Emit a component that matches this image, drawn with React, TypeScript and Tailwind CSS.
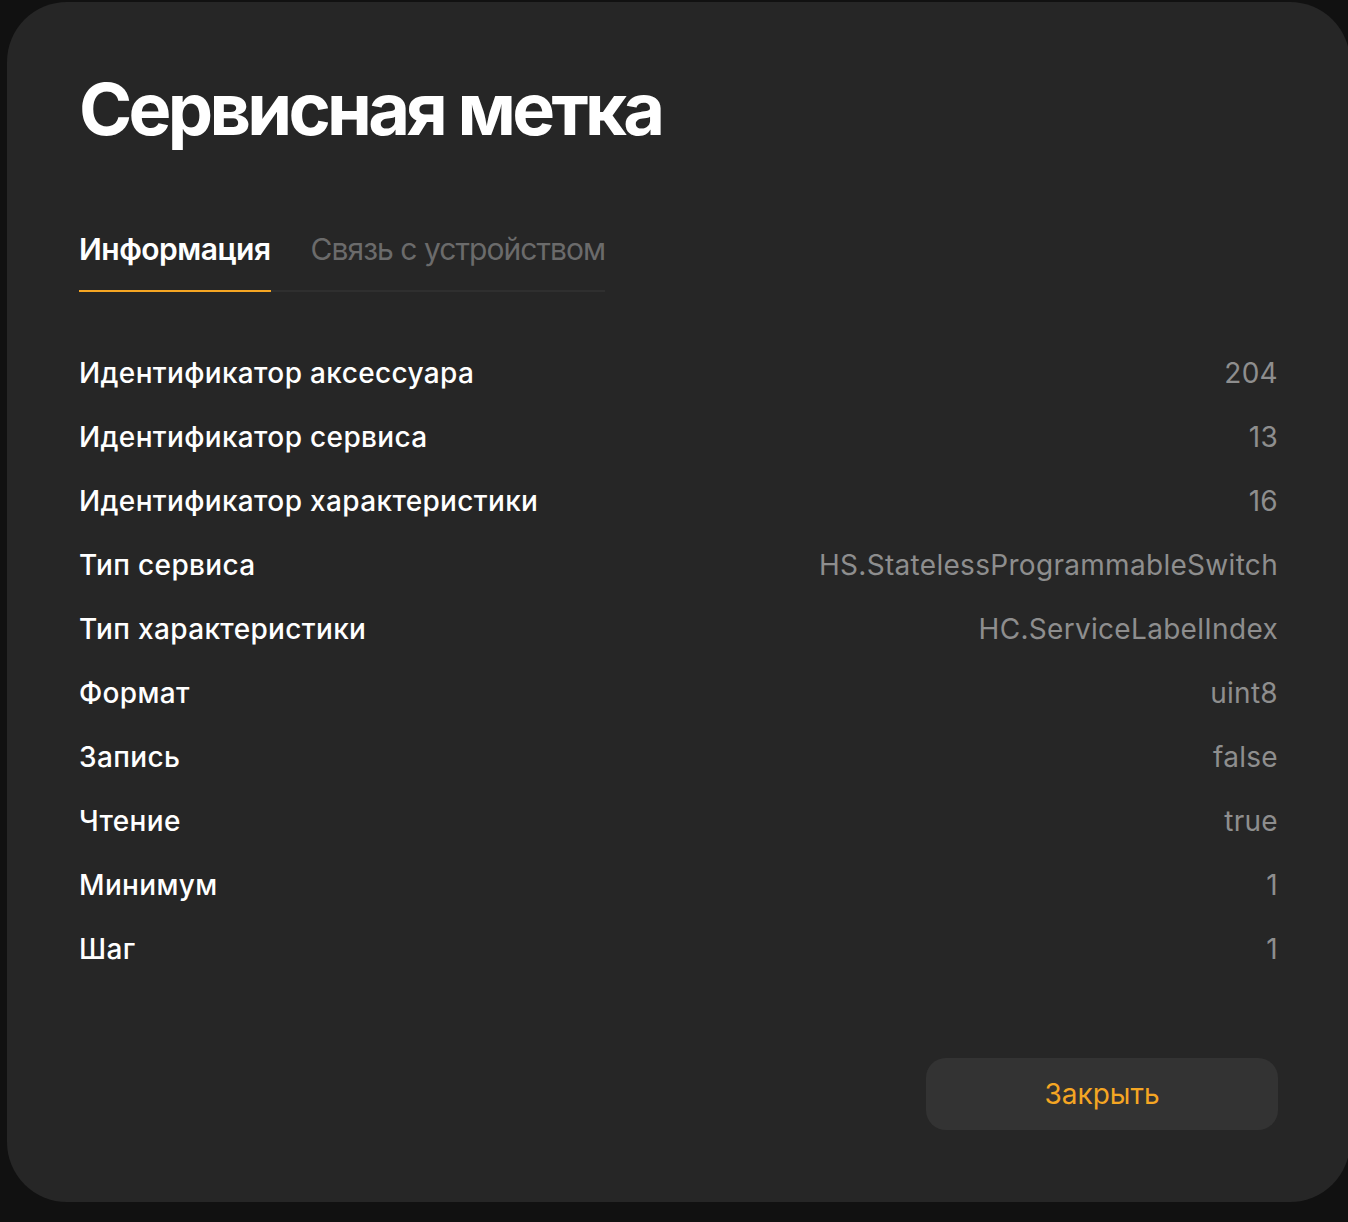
const rows: [string, string][] = [
  ["Идентификатор аксессуара", "204"],
  ["Идентификатор сервиса", "13"],
  ["Идентификатор характеристики", "16"],
  ["Тип сервиса", "HS.StatelessProgrammableSwitch"],
  ["Тип характеристики", "HC.ServiceLabelIndex"],
  ["Формат", "uint8"],
  ["Запись", "false"],
  ["Чтение", "true"],
  ["Минимум", "1"],
  ["Шаг", "1"],
];

const App = () => {
  return (
    <div
      className="w-[1348px] h-[1222px] overflow-hidden bg-[#111111] pt-[2px] pl-[7px]"
      style={{ fontFamily: "Inter, 'Noto Sans', sans-serif" }}
    >
      <div className="w-[1343px] h-[1200px] rounded-[60px] bg-[#262626] px-[72px] pt-[71px] flex flex-col">
        <h1 className="text-[72px] leading-[72px] font-bold text-white tracking-[-3.7px]">
          Сервисная метка
        </h1>

        <div className="mt-[86px] flex">
          <div className="flex gap-10 border-b-2 border-[#2f2f2f]">
            <button className="text-[30px] leading-[36px] font-semibold text-white tracking-[-0.5px] pb-[23px] -mb-[2px] border-b-2 border-[#f5a623]">
              Информация
            </button>
            <button className="text-[30px] leading-[36px] font-normal text-[#6b6b6b] tracking-[-0.95px] pb-[23px]">
              Связь с устройством
            </button>
          </div>
        </div>

        <div className="mt-[49px] flex flex-col">
          {rows.map(([label, value]) => (
            <div
              key={label}
              className="flex items-center justify-between h-[64px] text-[28px] leading-[64px]"
            >
              <span className="text-white font-medium tracking-[0.35px]">{label}</span>
              <span className="text-[#8e8e8e] tracking-[0.3px]">{value}</span>
            </div>
          ))}
        </div>

        <div className="mt-[77px] flex justify-end">
          <button className="w-[352px] h-[72px] rounded-[20px] bg-[#333333] text-[28px] text-[#f5a623]">
            Закрыть
          </button>
        </div>
      </div>
    </div>
  );
};

export default App;
